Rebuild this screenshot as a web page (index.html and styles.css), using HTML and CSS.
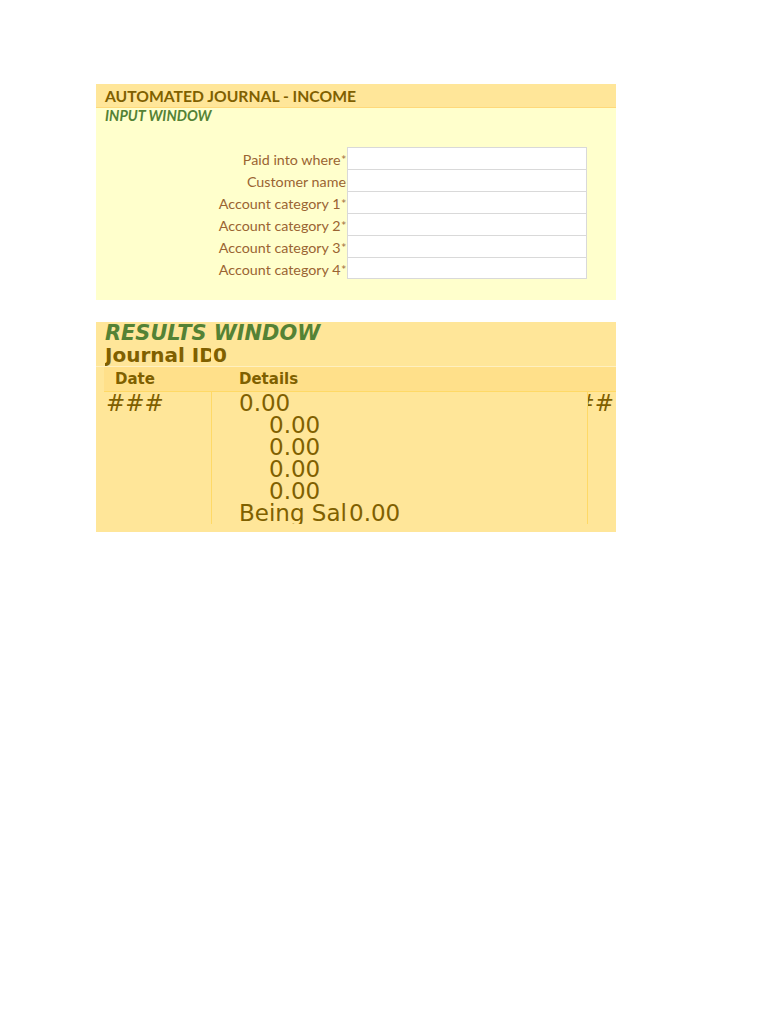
FILE: index.html
```html
<!DOCTYPE html>
<html>
<head>
<meta charset="utf-8">
<link rel="stylesheet" href="styles.css">
</head>
<body>
<div class="sheet">
  <div class="title">AUTOMATED JOURNAL - INCOME</div>
  <div class="input">
    <div class="input-head">INPUT WINDOW</div>
    <div class="form">
      <div class="label">Paid into where<sup>*</sup></div><div class="box"></div>
      <div class="label">Customer name</div><div class="box"></div>
      <div class="label">Account category 1<sup>*</sup></div><div class="box"></div>
      <div class="label">Account category 2<sup>*</sup></div><div class="box"></div>
      <div class="label">Account category 3<sup>*</sup></div><div class="box"></div>
      <div class="label">Account category 4<sup>*</sup></div><div class="box last"></div>
    </div>
  </div>
  <div class="results">
    <div class="res-head">RESULTS WINDOW</div>
    <div class="journal"><span class="jcell">Journal ID</span><span class="jval">0</span></div>
    <div class="colhead"><span class="h-date">Date</span><span class="h-details">Details</span></div>
    <div class="data">
      <div class="col-date"><div class="cell">###</div></div>
      <div class="col-details">
        <div class="cell first">0.00</div>
        <div class="cell ind">0.00</div>
        <div class="cell ind">0.00</div>
        <div class="cell ind">0.00</div>
        <div class="cell ind">0.00</div>
        <div class="cell first"><span class="narr">Being Sales income</span><span>0.00</span></div>
      </div>
      <div class="col-last"><div class="cell"><span>###</span></div></div>
    </div>
  </div>
</div>
</body>
</html>
```
FILE: styles.css
```css
body {
  margin: 0;
  background: #ffffff;
}
.sheet {
  margin-left: 96px;
  padding-top: 84px;
  width: 520px;
}
.title {
  height: 23px;
  line-height: 25px;
  background: #ffe699;
  border-bottom: 1px solid #ffd97a;
  padding-left: 9px;
  font-family: Lato, sans-serif;
  font-weight: bold;
  font-size: 15.7px;
  color: #7f6000;
}
.input {
  background: #ffffcc;
  height: 192px;
}
.input-head {
  padding-left: 9px;
  height: 16px;
  line-height: 16px;
  font-family: Lato, sans-serif;
  font-weight: bold;
  font-style: italic;
  font-size: 14.4px;
  color: #548235;
}
.form {
  margin-top: 23px;
  display: grid;
  grid-template-columns: 251px 240px;
  grid-auto-rows: 22px;
}
.label {
  text-align: right;
  padding-right: 1px;
  padding-top: 2px;
  line-height: 22px;
  height: 20px;
  font-family: Lato, sans-serif;
  font-size: 14.3px;
  color: #9a6432;
  white-space: nowrap;
}
.label sup {
  font-family: "DejaVu Sans", sans-serif;
  font-size: 9px;
  vertical-align: 3px;
  line-height: 0;
  margin-left: 1px;
}
.box {
  background: #ffffff;
  border: 1px solid #d9d9d9;
  border-bottom: none;
}
.box.last {
  border-bottom: 1px solid #d9d9d9;
}
.results {
  margin-top: 22px;
  background: #ffe699;
  height: 210px;
  font-family: "DejaVu Sans", sans-serif;
  color: #7f6000;
}
.res-head {
  height: 22px;
  line-height: 22px;
  padding-left: 9px;
  font-weight: bold;
  font-style: oblique;
  font-size: 20.9px;
  color: #548235;
}
.journal {
  height: 22px;
  line-height: 22px;
  border-bottom: 1px solid #fff0c0;
  display: flex;
  font-weight: bold;
  font-size: 20px;
}
.jcell {
  margin-left: 9px;
  width: 106px;
  overflow: hidden;
  white-space: nowrap;
}
.jval {
  margin-left: 2px;
}
.colhead {
  margin-left: 8px;
  height: 24px;
  line-height: 24px;
  background: #ffe08a;
  border-bottom: 1px solid #ffd966;
  display: flex;
  font-weight: bold;
  font-size: 15px;
}
.h-date {
  padding-left: 11px;
  width: 124px;
}
.data {
  display: flex;
  height: 132px;
  font-size: 23px;
}
.cell {
  height: 22px;
  line-height: 22px;
  white-space: nowrap;
}
.col-date {
  width: 105px;
  padding-left: 10px;
  border-right: 1px solid #ffd966;
  overflow: hidden;
}
.col-details {
  width: 375px;
  border-right: 1px solid #ffd966;
}
.col-details .first {
  padding-left: 27px;
  display: flex;
}
.col-details .ind {
  padding-left: 57px;
}
.narr {
  width: 108px;
  overflow: hidden;
  display: inline-block;
  margin-right: 2px;
}
.col-last {
  width: 28px;
  overflow: hidden;
}
.col-last .cell {
  display: flex;
  justify-content: flex-end;
  padding-right: 2px;
}
```
